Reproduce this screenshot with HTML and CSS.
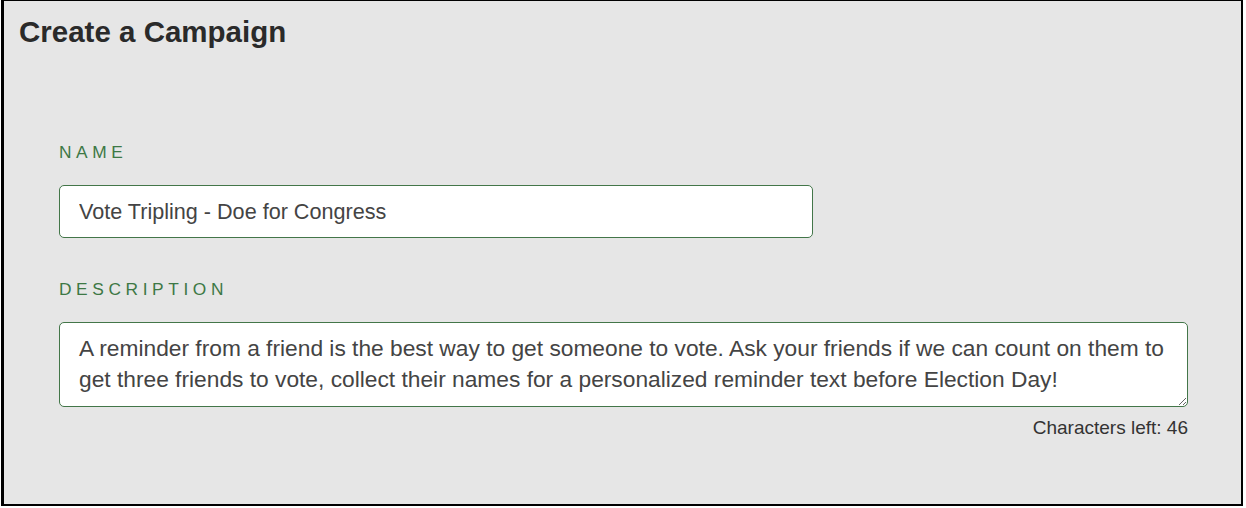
FILE: index.html
```html
<!DOCTYPE html>
<html lang="en">
<head>
<meta charset="utf-8">
<title>Create a Campaign</title>
<link rel="stylesheet" href="styles.css">
</head>
<body>
<div class="panel">
  <h1 class="panel-title">Create a Campaign</h1>
  <form class="form">
    <div class="field">
      <label class="field-label" for="name">Name</label>
      <input class="text-input" id="name" type="text" value="Vote Tripling - Doe for Congress">
    </div>
    <div class="field field-desc">
      <label class="field-label" for="desc">Description</label>
      <textarea class="text-area" id="desc">A reminder from a friend is the best way to get someone to vote. Ask your friends if we can count on them to get three friends to vote, collect their names for a personalized reminder text before Election Day!</textarea>
      <div class="char-count">Characters left: 46</div>
    </div>
  </form>
</div>
</body>
</html>
```

FILE: styles.css
```css
html, body {
  margin: 0;
  padding: 0;
  background: #ffffff;
}

body {
  font-family: "Liberation Sans", Arial, sans-serif;
}

.panel {
  box-sizing: border-box;
  width: 1242px;
  height: 506px;
  margin-left: 1px;
  background: #e6e6e6;
  border-style: solid;
  border-color: #000;
  border-width: 1px 2px 2px 3px;
  padding: 14px 0 0 15px;
}

.panel-title {
  margin: 0;
  font-size: 29.5px;
  line-height: 34px;
  font-weight: 700;
  color: #2a2a2a;
}

.form {
  margin: 95px 0 0 40px;
  display: flex;
  flex-direction: column;
}

.field {
  display: flex;
  flex-direction: column;
  align-items: flex-start;
}

.field-desc {
  margin-top: 43px;
}

.field-label {
  font-size: 17.33px;
  line-height: 17px;
  letter-spacing: 4.6px;
  text-transform: uppercase;
  color: #3d7845;
  margin-bottom: 24px;
}

.text-input,
.text-area {
  box-sizing: border-box;
  font-family: "Liberation Sans", Arial, sans-serif;
  color: #444;
  background: #fff;
  border: 1px solid #437649;
  border-radius: 5px;
  outline: none;
  margin: 0;
}

.text-input {
  width: 754px;
  height: 53px;
  padding: 0 19px;
  font-size: 21.6px;
}

.text-area {
  width: 1129px;
  height: 85px;
  padding: 10px 19px 11px;
  font-size: 22.75px;
  line-height: 31px;
  resize: both;
  overflow: hidden;
}

.char-count {
  width: 1129px;
  text-align: right;
  font-size: 19px;
  line-height: 22px;
  color: #333;
  margin-top: 10px;
}
```
